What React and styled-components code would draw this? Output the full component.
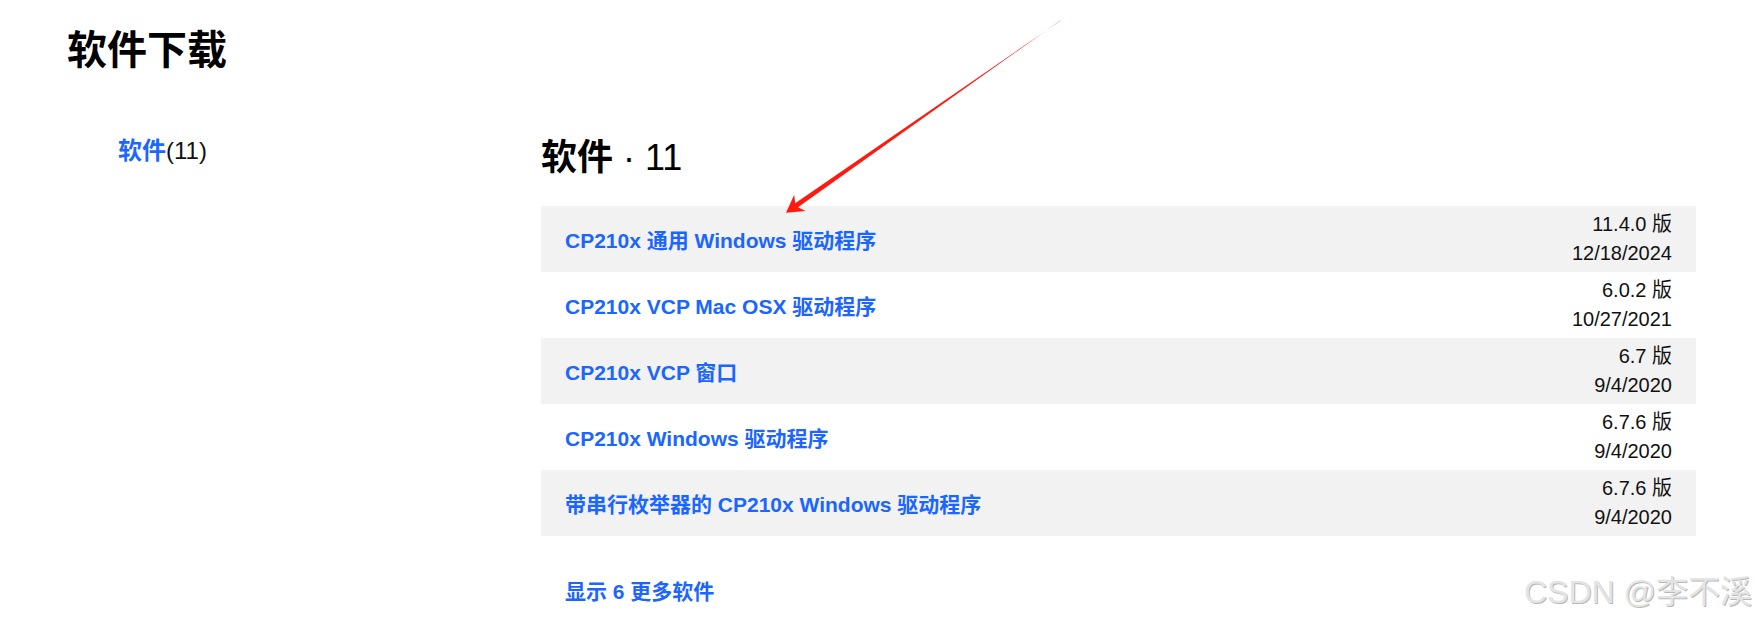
import React from "react";
import styled, { createGlobalStyle } from "styled-components";

const GlobalStyle = createGlobalStyle`
  html, body {
    margin: 0;
    padding: 0;
    background: #ffffff;
  }
  body {
    font-family: "Liberation Sans", Arial, "Noto Sans CJK SC", sans-serif;
    color: #111111;
  }
`;

const software = [
  { name: "CP210x 通用 Windows 驱动程序", version: "11.4.0", date: "12/18/2024" },
  { name: "CP210x VCP Mac OSX 驱动程序", version: "6.0.2", date: "10/27/2021" },
  { name: "CP210x VCP 窗口", version: "6.7", date: "9/4/2020" },
  { name: "CP210x Windows 驱动程序", version: "6.7.6", date: "9/4/2020" },
  { name: "带串行枚举器的 CP210x Windows 驱动程序", version: "6.7.6", date: "9/4/2020" },
];

function App() {
  return (
    <Page>
      <GlobalStyle />
      <Title>软件下载</Title>
      <Content>
        <Sidebar>
          <SideLink href="#">软件</SideLink>(11)
        </Sidebar>
        <Main>
          <Heading>
            <strong>软件</strong> · 11
          </Heading>
          <List>
            {software.map((item, i) => (
              <Row key={item.name} $shaded={i % 2 === 0}>
                <RowLink href="#">{item.name}</RowLink>
                <Meta>
                  <span>{item.version} 版</span>
                  <span>{item.date}</span>
                </Meta>
              </Row>
            ))}
          </List>
          <MoreLink href="#">显示 6 更多软件</MoreLink>
        </Main>
      </Content>

      <Arrow viewBox="0 0 1756 624" width="1756" height="624">
        <polygon
          fill="#ff1a10"
          points="1061,20 1059.7,21.3 795.2,203.2 794.2,194.7 786,212.7 805.6,211.1 798,207.2"
        />
      </Arrow>
      <Watermark>CSDN @李不溪</Watermark>
    </Page>
  );
}
export default App;

const Page = styled.div`
  position: relative;
  min-height: 624px;
  box-sizing: border-box;
  padding: 26px 60px 0 67px;
  display: flex;
  flex-direction: column;
`;

const Title = styled.h1`
  margin: 0;
  font-size: 40px;
  line-height: 48px;
  font-weight: 700;
  color: #000;
`;

const Content = styled.div`
  display: flex;
  flex-direction: row;
  margin-top: 62px;
`;

const Sidebar = styled.div`
  width: 474px;
  flex-shrink: 0;
  box-sizing: border-box;
  padding: 1px 0 0 51px;
  font-size: 24px;
  line-height: 28px;
  color: #111;
`;

const SideLink = styled.a`
  color: #1a66ff;
  font-weight: 700;
  text-decoration: none;
`;

const Main = styled.div`
  flex: 1;
  display: flex;
  flex-direction: column;
`;

const Heading = styled.h2`
  margin: 0;
  font-size: 36px;
  line-height: 44px;
  font-weight: 400;
  color: #000;

  strong {
    font-weight: 700;
  }
`;

const List = styled.div`
  margin-top: 26px;
  display: flex;
  flex-direction: column;
`;

const Row = styled.div`
  height: 66px;
  box-sizing: border-box;
  padding: 0 24px;
  display: flex;
  align-items: center;
  justify-content: space-between;
  background: ${(p) => (p.$shaded ? "#f2f2f2" : "#ffffff")};
`;

const RowLink = styled.a`
  color: #1a66ff;
  font-size: 21px;
  font-weight: 700;
  text-decoration: none;
`;

const Meta = styled.div`
  display: flex;
  flex-direction: column;
  align-items: flex-end;
  font-size: 20px;
  line-height: 29px;
  color: #111;
`;

const MoreLink = styled.a`
  margin-top: 41px;
  padding-left: 24px;
  color: #1a66ff;
  font-size: 21px;
  line-height: 30px;
  font-weight: 700;
  text-decoration: none;
`;

const Arrow = styled.svg`
  position: absolute;
  left: 0;
  top: 0;
  pointer-events: none;
`;

const Watermark = styled.div`
  position: absolute;
  right: 4px;
  bottom: 12px;
  font-size: 32px;
  line-height: 40px;
  color: #e4e4e4;
  text-shadow: 1px 1px 0 #b8b8b8;
  pointer-events: none;
`;
